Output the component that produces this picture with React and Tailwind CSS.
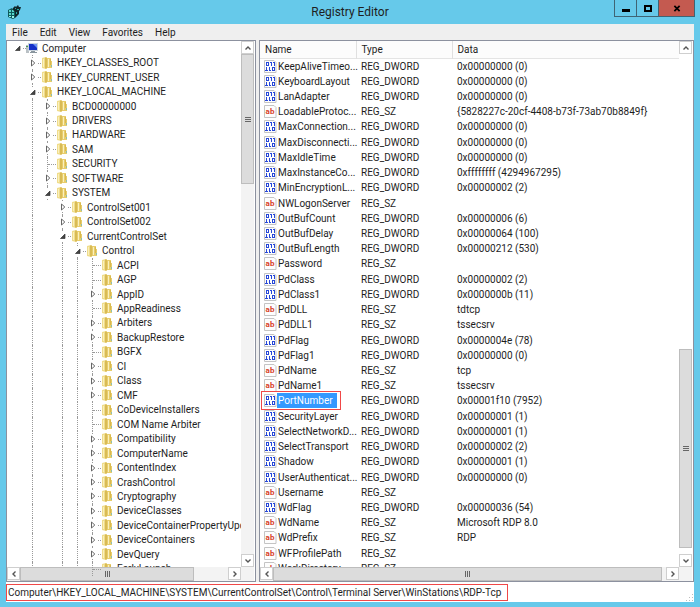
import React, { useState } from "react";
import { clsx } from "clsx";

// [depth, label, state]
const treeItems = [
  [0, "Computer", "open"],
  [1, "HKEY_CLASSES_ROOT", "closed"],
  [1, "HKEY_CURRENT_USER", "closed"],
  [1, "HKEY_LOCAL_MACHINE", "open"],
  [2, "BCD00000000", "closed"],
  [2, "DRIVERS", "closed"],
  [2, "HARDWARE", "closed"],
  [2, "SAM", "closed"],
  [2, "SECURITY", "leaf"],
  [2, "SOFTWARE", "closed"],
  [2, "SYSTEM", "open"],
  [3, "ControlSet001", "closed"],
  [3, "ControlSet002", "closed"],
  [3, "CurrentControlSet", "open"],
  [4, "Control", "open"],
  [5, "ACPI", "leaf"],
  [5, "AGP", "leaf"],
  [5, "AppID", "closed"],
  [5, "AppReadiness", "leaf"],
  [5, "Arbiters", "closed"],
  [5, "BackupRestore", "closed"],
  [5, "BGFX", "leaf"],
  [5, "CI", "closed"],
  [5, "Class", "closed"],
  [5, "CMF", "closed"],
  [5, "CoDeviceInstallers", "leaf"],
  [5, "COM Name Arbiter", "leaf"],
  [5, "Compatibility", "closed"],
  [5, "ComputerName", "closed"],
  [5, "ContentIndex", "closed"],
  [5, "CrashControl", "closed"],
  [5, "Cryptography", "closed"],
  [5, "DeviceClasses", "closed"],
  [5, "DeviceContainerPropertyUpd", "closed"],
  [5, "DeviceContainers", "closed"],
  [5, "DevQuery", "closed"],
  [5, "EarlyLaunch", "leaf"],
];

const DWORD = "REG_DWORD";
const SZ = "REG_SZ";

const values = [
  ["KeepAliveTimeo...", DWORD, "0x00000000 (0)"],
  ["KeyboardLayout", DWORD, "0x00000000 (0)"],
  ["LanAdapter", DWORD, "0x00000000 (0)"],
  ["LoadableProtoc...", SZ, "{5828227c-20cf-4408-b73f-73ab70b8849f}"],
  ["MaxConnection...", DWORD, "0x00000000 (0)"],
  ["MaxDisconnecti...", DWORD, "0x00000000 (0)"],
  ["MaxIdleTime", DWORD, "0x00000000 (0)"],
  ["MaxInstanceCo...", DWORD, "0xffffffff (4294967295)"],
  ["MinEncryptionL...", DWORD, "0x00000002 (2)"],
  ["NWLogonServer", SZ, ""],
  ["OutBufCount", DWORD, "0x00000006 (6)"],
  ["OutBufDelay", DWORD, "0x00000064 (100)"],
  ["OutBufLength", DWORD, "0x00000212 (530)"],
  ["Password", SZ, ""],
  ["PdClass", DWORD, "0x00000002 (2)"],
  ["PdClass1", DWORD, "0x0000000b (11)"],
  ["PdDLL", SZ, "tdtcp"],
  ["PdDLL1", SZ, "tssecsrv"],
  ["PdFlag", DWORD, "0x0000004e (78)"],
  ["PdFlag1", DWORD, "0x00000000 (0)"],
  ["PdName", SZ, "tcp"],
  ["PdName1", SZ, "tssecsrv"],
  ["PortNumber", DWORD, "0x00001f10 (7952)"],
  ["SecurityLayer", DWORD, "0x00000001 (1)"],
  ["SelectNetworkD...", DWORD, "0x00000001 (1)"],
  ["SelectTransport", DWORD, "0x00000002 (2)"],
  ["Shadow", DWORD, "0x00000001 (1)"],
  ["UserAuthenticat...", DWORD, "0x00000000 (0)"],
  ["Username", SZ, ""],
  ["WdFlag", DWORD, "0x00000036 (54)"],
  ["WdName", SZ, "Microsoft RDP 8.0"],
  ["WdPrefix", SZ, "RDP"],
  ["WFProfilePath", SZ, ""],
  ["WorkDirectory", SZ, ""],
];

const AppIcon = () => (
  <svg viewBox="0 0 14 14" className="size-[14px]" aria-hidden="true">
    <path d="M1 5l4-2 2 2 1 2v6l-2 1-5-2z" fill="#0f5a5c" />
    <path d="M2 5h2v2H2zM5 5h2v2H5zM2 8h2v2H2zM5 8h2v2H5z" fill="#58d8cc" />
    <path d="M2 11h2v1H2zM5 11h2v2H5z" fill="#9af0e6" />
    <path d="M6 3l2-2 1 1 2-2 1 2h2l-1 3-1 1v3l-3 3-1 1V7L6 5z" fill="#10262b" />
    <path d="M8 3h1v1H8zM10 4h2v1h-2zM9 7h1v2H9z" fill="#27a79f" />
  </svg>
);

const ComputerIcon = () => (
  <svg viewBox="0 0 12 12" className="h-3 w-3 shrink-0" aria-hidden="true">
    <path d="M0 3h3v8H0z" fill="#b9c0c4" />
    <path d="M0 4h2v1H0z" fill="#4d9a58" />
    <path d="M2 1h10v8H2z" fill="#c9d3dc" />
    <path d="M3 2h8v6H3z" fill="#1430c8" />
    <path d="M7 2h4v4z" fill="#6d93f2" />
    <path d="M5 9h4v1h2v1H4v-1h1z" fill="#8a969e" />
  </svg>
);

const FolderIcon = () => (
  <svg viewBox="0 0 12 12" className="h-3 w-3 shrink-0" aria-hidden="true">
    <path d="M1 1l4-1 1 1v10l-1 1-4-1z" fill="#efdc8c" />
    <path d="M4 1l1-1 1 1v10l-1 1-1-1z" fill="#d9bb55" />
    <path d="M6 1h4v3h1v7H6z" fill="#e8cd6c" />
    <path d="M2 2h1v8H2zM7 2h1v8H7z" fill="#faf0bd" />
    <path d="M9 2h1v6H9z" fill="#d8b950" />
    <path d="M10 8h1v2h-1z" fill="#8fbfae" />
  </svg>
);

const ValueIcon = ({ binary }) => (
  <svg viewBox="0 0 13 13" className="h-[13px] w-[13px] shrink-0" aria-hidden="true">
    <path d="M0.5 0.5h9.5l2 2v10H0.5z" fill="#fdfdfd" stroke="#c4c4c4" />
    {binary ? (
      <g fill="none" stroke="#2647d8" shapeRendering="crispEdges">
        <path d="M2.5 2.5h2v3h-2zM7.5 2v4M10.5 2v4M2.5 7v4M5.5 7v4M8.5 7.5h2v3h-2z" />
        <path d="M6 2.5h1M9 2.5h1M1 10.5h3M5 10.5h2" />
      </g>
    ) : (
      <text x="6" y="9" textAnchor="middle" fontSize="8" fontWeight="700" fill="#d8401f">
        ab
      </text>
    )}
  </svg>
);

const Chevron = ({ direction }) => {
  const paths = {
    up: "M1.5 5.5L4 3l2.5 2.5",
    down: "M1.5 2.5L4 5l2.5-2.5",
    left: "M5.5 1.5L3 4l2.5 2.5",
    right: "M2.5 1.5L5 4L2.5 6.5",
  };
  return (
    <svg viewBox="0 0 8 8" className="size-2" fill="none" stroke="#555" strokeWidth="1.4" aria-hidden="true">
      <path d={paths[direction]} />
    </svg>
  );
};

const ScrollButton = ({ direction, className }) => (
  <button
    type="button"
    aria-label={`Scroll ${direction}`}
    className={clsx("flex size-[13px] shrink-0 items-center justify-center border border-[#cfcfcf] bg-white", className)}
  >
    <Chevron direction={direction} />
  </button>
);

const Grip = ({ vertical }) => (
  <span className={clsx("flex gap-px", vertical && "flex-col")}>
    {[0, 1, 2].map((i) => (
      <span key={i} className={clsx("bg-[#666]", vertical ? "h-px w-1.5" : "h-1.5 w-px")} />
    ))}
  </span>
);

const Thumb = ({ vertical, className }) => (
  <div className={clsx("flex items-center justify-center border border-[#bdbdbd] bg-[#dcdcdc]", className)}>
    <Grip vertical={vertical} />
  </div>
);

const TreeRow = ({ item }) => {
  const [depth, label, initial] = item;
  const [state, setState] = useState(initial);
  // SYSTEM is the last key of its level, so level 2 has no line below it
  const guides = Array.from({ length: depth }, (_, level) => level !== 0 && !(level === 2 && depth > 2));

  return (
    <li className="flex min-h-0 items-center pl-[3px]">
      {guides.map((shown, i) => (
        <span key={i} className="flex w-[15px] shrink-0 justify-center self-stretch">
          {shown && <span className="border-l border-dotted border-[#9a9a9a]" />}
        </span>
      ))}
      <span className="relative flex w-4 shrink-0 items-center justify-start self-stretch">
        {depth > 0 && <span className="absolute inset-y-0 left-[7px] border-l border-dotted border-[#9a9a9a]" />}
        <span className="absolute top-1/2 right-0 left-2 border-t border-dotted border-[#9a9a9a]" />
        {state !== "leaf" && (
          <button
            type="button"
            aria-label={`Toggle ${label}`}
            onClick={() => setState(state === "open" ? "closed" : "open")}
            className="relative ml-1 flex h-2.5 w-2 items-center justify-center bg-white"
          >
            <svg viewBox="0 0 8 8" className="size-2" aria-hidden="true">
              {state === "open" ? (
                <path d="M6 2v4.5H1.5z" fill="#444" stroke="#333" strokeWidth="0.7" />
              ) : (
                <path d="M2.5 1L5.8 4L2.5 7z" fill="#fff" stroke="#666" strokeWidth="1" />
              )}
            </svg>
          </button>
        )}
      </span>
      {depth === 0 ? <ComputerIcon /> : <FolderIcon />}
      <span className="pl-1 whitespace-nowrap">{label}</span>
    </li>
  );
};

const KeyTree = () => (
  <section className="flex w-[250px] shrink-0 flex-col border border-[#8c919f] bg-white pr-px" aria-label="Keys">
    <div className="flex min-h-0 flex-1">
      <ul className="grid h-[535px] min-w-0 flex-1 auto-rows-fr overflow-hidden">
        {treeItems.map((item) => (
          <TreeRow key={item[1]} item={item} />
        ))}
      </ul>
      <div className="flex w-[13px] shrink-0 flex-col bg-[#f3f3f3]">
        <ScrollButton direction="up" />
        <Thumb vertical className="h-[130px]" />
        <ScrollButton direction="down" className="mt-auto" />
      </div>
    </div>
    <div className="flex h-[14px] shrink-0 bg-[#f3f3f3]">
      <ScrollButton direction="left" />
      <Thumb className="w-[174px]" />
      <ScrollButton direction="right" className="mr-[13px] ml-auto" />
    </div>
  </section>
);

const ValueList = () => (
  <section className="flex min-w-0 flex-1 flex-col border border-[#8c919f] bg-white pr-px" aria-label="Values">
    <div className="flex min-h-0 flex-1">
      <div className="min-w-0 flex-1 overflow-hidden">
        <table className="h-[535px] w-full table-fixed border-collapse text-left">
          <thead>
            <tr className="h-[17px] border-b border-[#e4e4e4] bg-[#fcfcfc]">
              <th className="w-24 border-r border-[#e0e0e0] pl-[5px] font-normal">Name</th>
              <th className="w-24 border-r border-[#e0e0e0] pl-[5px] font-normal">Type</th>
              <th className="pl-[5px] font-normal">Data</th>
            </tr>
          </thead>
          <tbody>
            {values.map(([name, type, data]) => {
              const selected = name === "PortNumber";
              return (
                <tr key={name}>
                  <td className="p-0">
                    <div className="relative flex items-center pl-1 whitespace-nowrap">
                      <ValueIcon binary={type === DWORD} />
                      <span className={clsx("px-px leading-[15px]", selected && "bg-[#3399ff] pr-1 text-white")}>
                        {name}
                      </span>
                      {selected && (
                        <span className="absolute -inset-y-0.5 left-px w-20 border border-[#f04848]" />
                      )}
                    </div>
                  </td>
                  <td className="p-0 pl-[5px] whitespace-nowrap">{type}</td>
                  <td className="p-0 pl-[5px] whitespace-nowrap">{data}</td>
                </tr>
              );
            })}
          </tbody>
        </table>
      </div>
      <div className="flex w-[13px] shrink-0 flex-col bg-white">
        <ScrollButton direction="up" />
        <Thumb vertical className="mt-auto h-[199px]" />
        <ScrollButton direction="down" className="mt-[6px]" />
      </div>
    </div>
    <div className="flex h-[14px] shrink-0 bg-[#f3f3f3]">
      <ScrollButton direction="left" />
      <Thumb className="mr-1 flex-1" />
      <ScrollButton direction="right" className="mr-[13px]" />
    </div>
  </section>
);

const TitleBar = () => (
  <header className="relative flex h-6 shrink-0 items-center justify-center">
    <span className="absolute top-[5px] left-[7px]">
      <AppIcon />
    </span>
    <h1 className="text-[12px] leading-4">Registry Editor</h1>
    <div className="absolute top-0 right-[5px] flex h-[17px] border border-t-0 border-[#3f6474]">
      <button type="button" aria-label="Minimize" className="flex w-[22px] items-center justify-center border-r border-[#3f6474]">
        <span className="mt-1 h-[3px] w-2 bg-black" />
      </button>
      <button type="button" aria-label="Maximize" className="flex w-[21px] items-center justify-center">
        <span className="h-[7px] w-2 border-2 border-black" />
      </button>
      <button type="button" aria-label="Close" className="flex w-[36px] items-center justify-center border-l border-[#3f6474] bg-[#c45a50]">
        <svg viewBox="0 0 8 8" className="h-[7px] w-2" stroke="#000" strokeWidth="2" aria-hidden="true">
          <path d="M1 1L7 7M7 1L1 7" />
        </svg>
      </button>
    </div>
  </header>
);

const MenuBar = () => (
  <nav className="flex h-4 shrink-0 items-center bg-[#efefef]">
    {["File", "Edit", "View", "Favorites", "Help"].map((name) => (
      <button key={name} type="button" className="px-1.5">
        {name}
      </button>
    ))}
  </nav>
);

const StatusBar = () => (
  <footer className="flex h-5 shrink-0 items-center justify-between bg-white">
    <p className="flex h-[17px] items-center border border-[#f04848] pr-[6px] pl-px whitespace-nowrap">
      Computer\HKEY_LOCAL_MACHINE\SYSTEM\CurrentControlSet\Control\Terminal Server\WinStations\RDP-Tcp
    </p>
    <svg viewBox="0 0 8 8" className="size-2 self-end" fill="#bdbdbd" aria-hidden="true">
      <path d="M6 0h1v1H6zM6 3h1v1H6zM6 6h1v1H6zM3 3h1v1H3zM3 6h1v1H3zM0 6h1v1H0z" />
    </svg>
  </footer>
);

const App = () => {
  return (
    <div className="flex h-screen flex-col overflow-hidden bg-[#66c9ea] font-[Roboto,sans-serif] text-[10px] leading-[13px] text-[#1e1e1e]">
      <TitleBar />
      <div className="mx-1.5 mb-[5px] flex min-h-0 flex-1 flex-col bg-[#efefef]">
        <MenuBar />
        <main className="flex min-h-0 flex-1 gap-[3px]">
          <KeyTree />
          <ValueList />
        </main>
        <StatusBar />
      </div>
    </div>
  );
};

export default App;
